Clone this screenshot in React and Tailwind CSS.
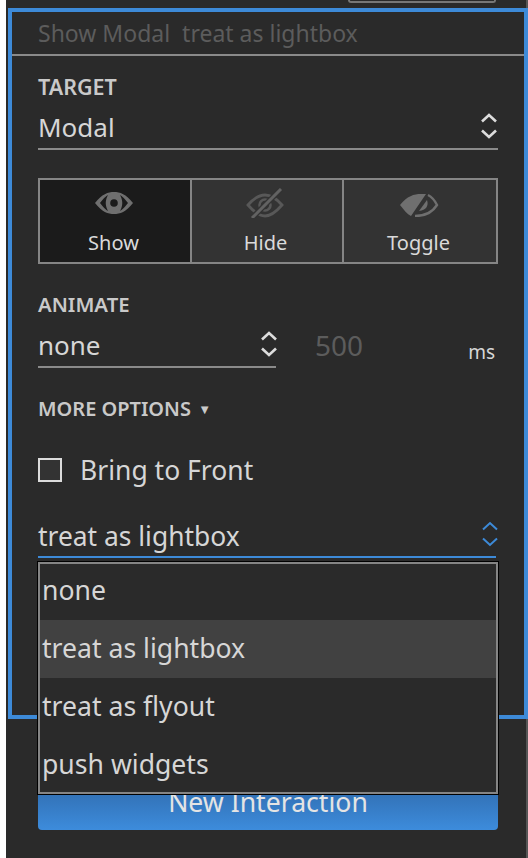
const sans = "font-['Noto_Sans',sans-serif]"

function UpDown({ className = "stroke-[#dcdcdc]", width = 2.6 }) {
    return (
        <svg viewBox="0 0 16 26" className={`w-4 h-[26px] fill-none ${className}`} strokeWidth={width}>
            <path d="M1 8.5 L8 2 L15 8.5" />
            <path d="M1 17.5 L8 24 L15 17.5" />
        </svg>
    )
}

function EyeShow() {
    return (
        <svg viewBox="0 0 40 24" className="w-10 h-6">
            <path d="M1 12 C8 3 14 1 20 1 C26 1 32 3 39 12 C32 21 26 23 20 23 C14 23 8 21 1 12 Z M6 12 C10 17 12 19 14 20 C11 15 11 9 14 4 C12 5 10 7 6 12 Z M34 12 C30 7 28 5 26 4 C29 9 29 15 26 20 C28 19 30 17 34 12 Z" fill="#6f6f6f" fillRule="evenodd" />
            <circle cx="20" cy="12" r="3.8" fill="#1b1b1b" />
        </svg>
    )
}

function EyeHide() {
    return (
        <svg viewBox="0 0 40 30" className="w-10 h-[30px]">
            <path d="M2 17 C8 10 13 7 19 7 C25 7 30 10 36 17 C30 24 25 28 19 28 C13 28 8 24 2 17 Z" fill="none" stroke="#585858" strokeWidth="2.8" />
            <circle cx="19" cy="17" r="5.5" fill="none" stroke="#585858" strokeWidth="2.6" />
            <path d="M6 30 L35 1" stroke="#333333" strokeWidth="5.5" />
            <path d="M6 30 L35 1" stroke="#626262" strokeWidth="3" />
        </svg>
    )
}

function EyeToggle() {
    return (
        <svg viewBox="0 0 40 24" className="w-10 h-6 mt-1">
            <path d="M1 12 C8 3 15 1 22 1 L27 1 L12 23 C8 21 5 17 1 12 Z" fill="#6f6f6f" />
            <path d="M29 2 C33 4 36 8 38 12 C33 20 26 23 16 23" fill="none" stroke="#6f6f6f" strokeWidth="2.4" />
            <path d="M20 18 L28 7 C30 13 27 17 20 18 Z" fill="#6f6f6f" />
        </svg>
    )
}

function ModeButton({ label, active, children, className = "" }) {
    return (
        <div className={`flex flex-col items-center pr-[3px] ${active ? "bg-[#1b1b1b]" : "bg-[#333333]"} ${className}`}>
            <div className="h-[46px] flex items-center justify-center">{children}</div>
            <span className="mt-1 text-[20px] leading-[26px] text-[#dadada]">{label}</span>
        </div>
    )
}

function Label({ children, className = "" }) {
    return <div className={`leading-6 font-semibold text-[#c9c9c9] ${className}`}>{children}</div>
}

export default function App() {
    const options = ["none", "treat as lightbox", "treat as flyout", "push widgets"]

    return (
        <div className={`w-[528px] h-[858px] overflow-hidden flex bg-[#2a2a2a] ${sans}`}>
            <div className="w-1.5 bg-white shrink-0" />
            <div className="w-[522px] flex flex-col">
                <div className="h-2 border-r-2 border-[#555555]">
                    <div className="ml-[342px] w-[148px] h-[3px] border-2 border-t-0 border-[#777777] rounded-b-md" />
                </div>

                <div className="ml-0.5 w-[520px] h-[711px] shrink-0 border-4 border-[#3d8ad8]">
                    <div className="h-11 pl-[26px] border-b-2 border-[#8a8a8a] flex items-center text-[23px] text-[#5c5c5c] whitespace-pre">
                        Show Modal  treat as lightbox
                    </div>

                    <div className="px-[26px] pt-[19px]">
                        <Label className="text-[21.5px]">TARGET</Label>
                        <div className="mt-[7px] h-[44px] border-b-2 border-[#8a8a8a] flex items-center justify-between pr-px">
                            <span className="text-[26px] text-[#d6d6d6]">Modal</span>
                            <div className="mb-[3px]"><UpDown /></div>
                        </div>

                        <div className="mt-7 h-[86px] border-2 border-[#858585] grid grid-cols-[152px_152px_1fr]">
                            <ModeButton label="Show" active className="border-r-2 border-[#858585]"><EyeShow /></ModeButton>
                            <ModeButton label="Hide" className="border-r-2 border-[#858585]"><EyeHide /></ModeButton>
                            <ModeButton label="Toggle"><EyeToggle /></ModeButton>
                        </div>

                        <Label className="mt-7 text-[20.4px]">ANIMATE</Label>
                        <div className="mt-[9px] flex items-start">
                            <div className="w-[238px] h-[43px] border-b-2 border-[#8a8a8a] flex items-center justify-between">
                                <span className="text-[26px] text-[#d6d6d6]">none</span>
                                <div className="mb-1 -mr-px"><UpDown /></div>
                            </div>
                            <span className="ml-[39px] mt-px text-[28px] leading-[38px] text-[#5c5c5c]">500</span>
                            <span className="ml-auto mr-[3px] mt-[13px] text-[19px] leading-7 text-[#d6d6d6]">ms</span>
                        </div>

                        <Label className="mt-[29px] text-[20px]">MORE OPTIONS <span className="text-[13px] align-[2px] ml-0.5">▼</span></Label>

                        <div className="mt-[37px] flex items-center">
                            <div className="w-6 h-6 border-2 border-[#dcdcdc] bg-[#333333]" />
                            <span className="ml-[18px] text-[26.5px] leading-6 text-[#d6d6d6]">Bring to Front</span>
                        </div>

                        <div className="relative mt-[34px]">
                            <div className="h-[42px] pt-0.5 border-b-2 border-[#3d8ad8] flex items-center justify-between w-[458px]">
                                <span className="text-[26.4px] text-[#d6d6d6]">treat as lightbox</span>
                                <div className="mb-1.5 -mr-0.5"><UpDown className="stroke-[#3d8ad8]" width={2} /></div>
                            </div>
                            <div className="absolute left-0 top-[46px] w-[460px] h-[232px] border-2 border-[#858585] outline outline-1 outline-black bg-[#2a2a2a]">
                                <div className="-mt-0.5">
                                    {options.map((o) => (
                                        <div
                                            key={o}
                                            className={`h-[58px] pl-0.5 flex items-center text-[26.6px] text-[#d6d6d6] ${o === "treat as lightbox" ? "bg-[#414141]" : ""}`}
                                        >
                                            {o}
                                        </div>
                                    ))}
                                </div>
                            </div>
                        </div>
                    </div>
                </div>

                <div className="flex-1 border-r-2 border-[#555555] pl-8">
                    <div className="mt-[57px] w-[460px] h-[54px] rounded bg-gradient-to-b from-[#2d66a6] to-[#3d8cdc] flex items-center justify-center text-[26.6px] text-[#e4e4e4]">
                        New Interaction
                    </div>
                </div>
            </div>
        </div>
    )
}
